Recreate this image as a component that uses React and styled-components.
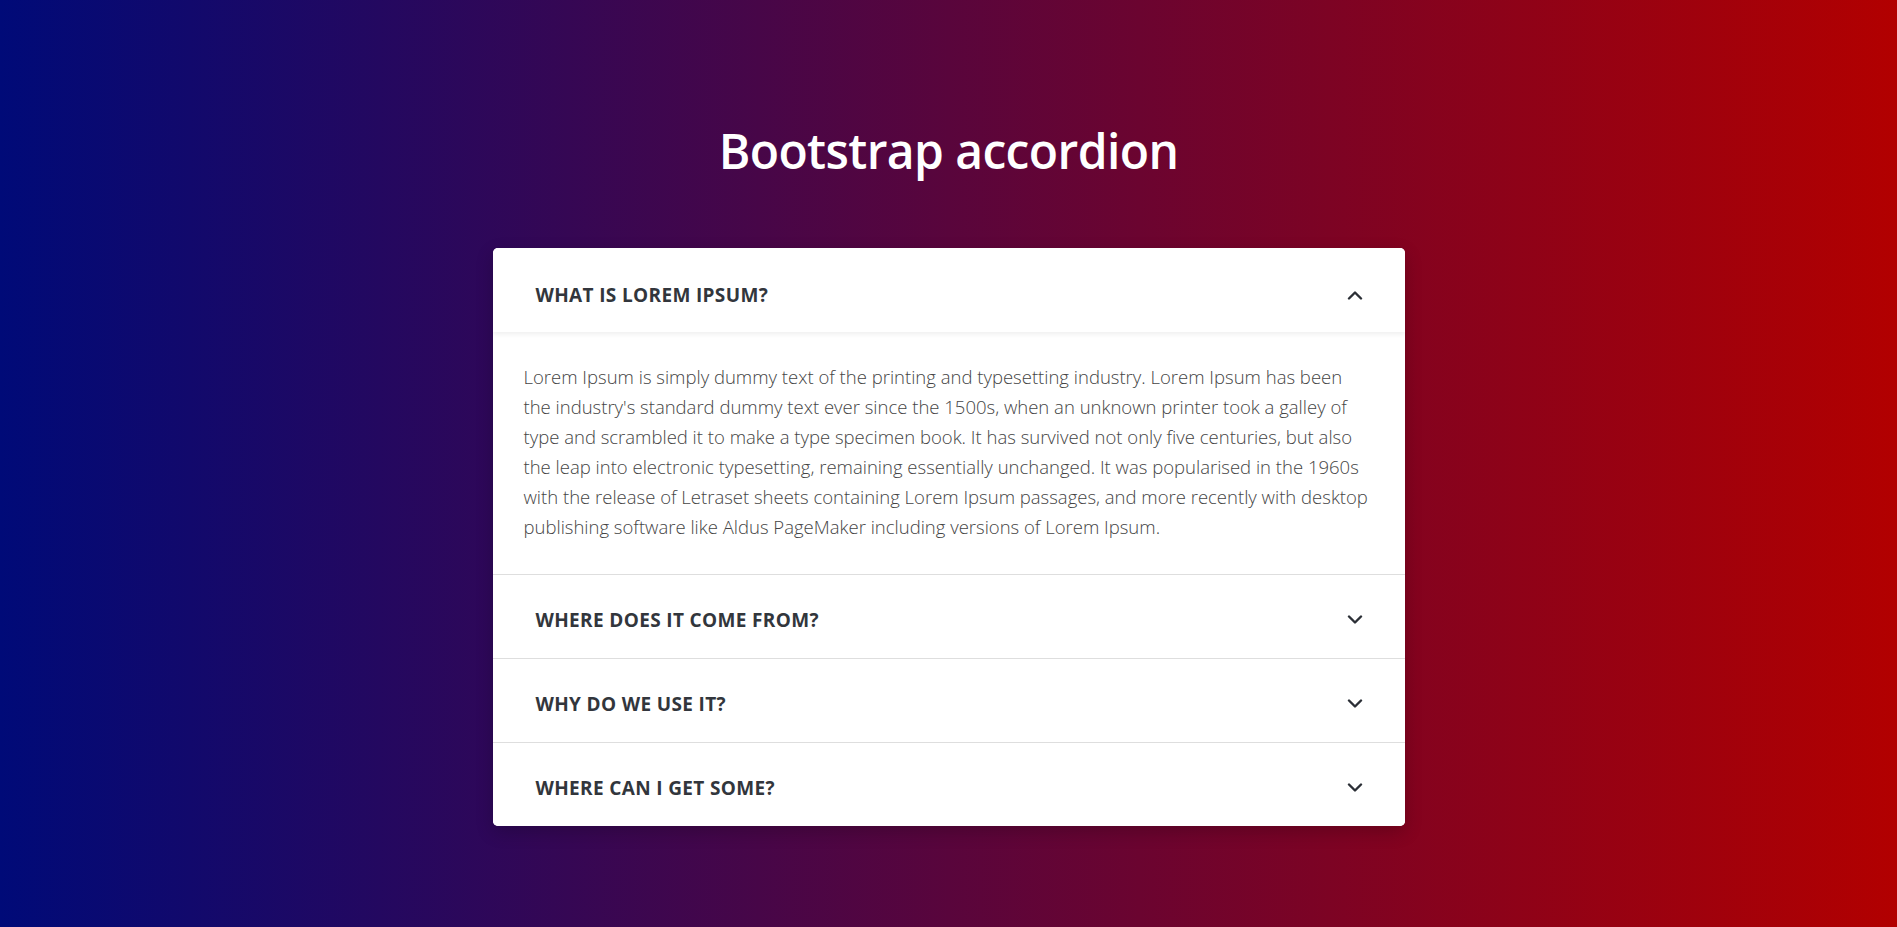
import React, { useState } from 'react';
import styled, { createGlobalStyle } from 'styled-components';

const items = [
  {
    title: 'What is Lorem Ipsum?',
    body:
      "Lorem Ipsum is simply dummy text of the printing and typesetting industry. Lorem Ipsum has been the industry's standard dummy text ever since the 1500s, when an unknown printer took a galley of type and scrambled it to make a type specimen book. It has survived not only five centuries, but also the leap into electronic typesetting, remaining essentially unchanged. It was popularised in the 1960s with the release of Letraset sheets containing Lorem Ipsum passages, and more recently with desktop publishing software like Aldus PageMaker including versions of Lorem Ipsum.",
  },
  {
    title: 'Where does it come from?',
    body:
      'Contrary to popular belief, Lorem Ipsum is not simply random text. It has roots in a piece of classical Latin literature from 45 BC, making it over 2000 years old.',
  },
  {
    title: 'Why do we use it?',
    body:
      'It is a long established fact that a reader will be distracted by the readable content of a page when looking at its layout.',
  },
  {
    title: 'Where can I get some?',
    body:
      'There are many variations of passages of Lorem Ipsum available, but the majority have suffered alteration in some form, by injected humour, or randomised words.',
  },
];

const Chevron = ({ up }) => (
  <svg width="16" height="10" viewBox="0 0 16 10" fill="none">
    <path
      d={up ? 'M2 8.5 L8 2.5 L14 8.5' : 'M2 1.5 L8 7.5 L14 1.5'}
      stroke="#2b2f36"
      strokeWidth="2.4"
      strokeLinecap="round"
      strokeLinejoin="round"
    />
  </svg>
);

const App = () => {
  const [open, setOpen] = useState(0);

  return (
    <>
      <GlobalStyle />
      <Page>
        <Title>Bootstrap accordion</Title>
        <Accordion>
          {items.map((item, i) => (
            <Item key={item.title} first={i === 0}>
              <Header open={open === i} onClick={() => setOpen(open === i ? -1 : i)}>
                <span>{item.title}</span>
                <Chevron up={open === i} />
              </Header>
              {open === i && <Body>{item.body}</Body>}
            </Item>
          ))}
        </Accordion>
      </Page>
    </>
  );
};

const GlobalStyle = createGlobalStyle`
  * { box-sizing: border-box; }
  body {
    margin: 0;
    font-family: "Open Sans", "Noto Sans", sans-serif;
  }
`;

const Page = styled.div`
  min-height: 100vh;
  background: linear-gradient(to right, #000a78, #b20000);
  padding: 122px 0 60px;
  display: flex;
  flex-direction: column;
  align-items: center;
`;

const Title = styled.h1`
  margin: 0 0 68px;
  color: #fff;
  font-size: 48px;
  font-weight: 600;
  line-height: 58px;
  letter-spacing: -0.6px;
`;

const Accordion = styled.div`
  width: 912px;
  background: #fff;
  border-radius: 5px;
  overflow: hidden;
  box-shadow: 0 6px 18px rgba(0, 0, 0, 0.2);
`;

const Item = styled.div`
  border-top: ${(p) => (p.first ? 'none' : '1px solid #dedede')};
`;

const Header = styled.button`
  width: 100%;
  height: ${(p) => (p.open ? '84px' : '83px')};
  display: flex;
  align-items: center;
  justify-content: space-between;
  padding: ${(p) => (p.open ? '10px' : '7px')} 42px 0 43px;
  border: none;
  background: #fff;
  cursor: pointer;
  font-family: "Open Sans", "Noto Sans", sans-serif;
  font-size: 19px;
  font-weight: 700;
  color: #32363c;
  text-transform: uppercase;
  letter-spacing: 0.35px;
  position: relative;
  box-shadow: ${(p) => (p.open ? '0 2px 5px rgba(0, 0, 0, 0.07)' : 'none')};
`;

const Body = styled.div`
  padding: 30px 36px 32px 31px;
  font-size: 18.5px;
  font-weight: 300;
  line-height: 30px;
  color: #454545;
`;

export default App;
